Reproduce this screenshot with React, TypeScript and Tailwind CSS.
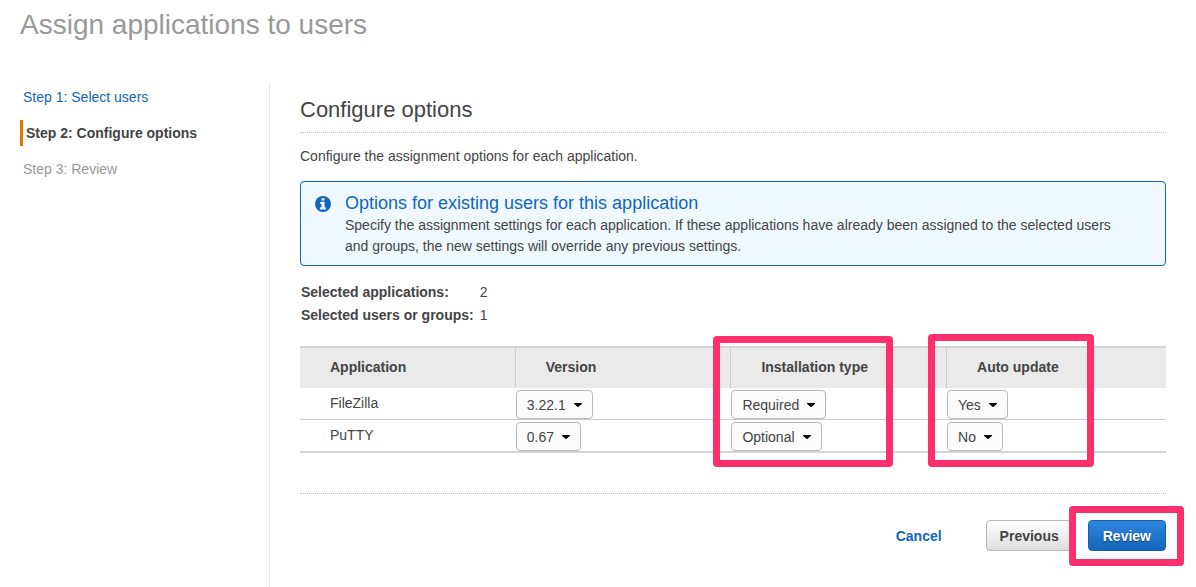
import type { ReactNode } from "react";

const apps = [
  { name: "FileZilla", version: "3.22.1", type: "Required", update: "Yes" },
  { name: "PuTTY", version: "0.67", type: "Optional", update: "No" },
];

function InfoIcon() {
  return (
    <svg viewBox="0 0 16 16" aria-hidden="true" className="mt-[5px] size-4 shrink-0">
      <circle cx="8" cy="8" r="8" fill="#1166bb" />
      <path
        fill="#f0f8ff"
        d="M6.9 2.2h2.2c.2 0 .4.2.4.4v1.5c0 .2-.2.4-.4.4H6.9c-.2 0-.4-.2-.4-.4V2.6c0-.2.2-.4.4-.4zM5.6 5.8h3.6c.2 0 .4.2.4.4v5.1h.9c.2 0 .4.2.4.4v1.5c0 .2-.2.4-.4.4H5.5c-.2 0-.4-.2-.4-.4v-1.5c0-.2.2-.4.4-.4h1V8h-.9c-.2 0-.4-.2-.4-.4V6.2c0-.2.2-.4.4-.4z"
      />
    </svg>
  );
}

function Dropdown({ label, value, options }: { label: string; value: string; options: string[] }) {
  return (
    <div className="relative inline-flex align-top">
      <select
        aria-label={label}
        defaultValue={value}
        className="h-[29px] appearance-none rounded border border-[#b8b8b8] bg-[#fcfcfc] pl-[10px] pr-[26px] pt-px text-[#444] [field-sizing:content]"
      >
        {options.map((o) => (
          <option key={o}>{o}</option>
        ))}
      </select>
      <svg
        viewBox="0 0 8 4"
        className="pointer-events-none absolute right-[11px] top-[13px] h-1 w-2 text-black"
        fill="currentColor"
      >
        <path d="M0.6 0h6.8c.6 0 .8.5.4.9L4.6 3.8a.9.9 0 0 1-1.2 0L.2.9C-.2.5 0 0 .6 0z" />
      </svg>
    </div>
  );
}

function Highlight({ className }: { className: string }) {
  return (
    <span
      className={`pointer-events-none absolute z-10 rounded-sm border-[7px] border-[#ff2f6e] ${className}`}
    />
  );
}

function HeadCell({ children }: { children: ReactNode }) {
  return (
    <th
      scope="col"
      className="relative h-[42px] w-[24.9%] border-l border-t-2 border-l-[#ccc] border-t-[#d4d4d4] bg-[#eaeaea] pb-[2px] pl-[30px] text-left font-bold first:w-[24.8%] first:border-l-0 last:w-auto"
    >
      {children}
    </th>
  );
}

export default function App() {
  const cell = "border-b border-[#ccc] pl-px pt-[2px] align-top group-last:border-b-2 group-last:border-[#d4d4d4]";

  return (
    <div className="flex min-h-screen flex-col bg-white font-['Liberation_Sans',Arial,sans-serif] text-sm leading-[21px] text-[#444]">
      <h1 className="px-5 pb-10 pt-[5px] text-[28px] leading-[39px] text-[#999]">
        Assign applications to users
      </h1>

      <div className="flex grow">
        <nav className="w-[270px] shrink-0 border-r border-[#e5e5e5] pl-5">
          <ol className="flex flex-col gap-[10px] leading-[22px]">
            <li className="border-l-[3px] border-transparent py-[2px]">
              <a href="#users" className="text-[#1166bb]">
                Step 1: Select users
              </a>
            </li>
            <li className="border-l-[3px] border-[#e07700] py-[2px] pl-[3px] font-bold" aria-current="step">
              Step 2: Configure options
            </li>
            <li className="border-l-[3px] border-transparent py-[2px] text-[#999]">Step 3: Review</li>
          </ol>
        </nav>

        <main className="min-w-0 grow pl-[30px] pr-[30px]">
          <h2 className="border-b border-dotted border-[#bbb] pb-[7px] pt-[11px] text-[22px] leading-[30px]">
            Configure options
          </h2>
          <p className="mt-[13px]">Configure the assignment options for each application.</p>

          <section className="mt-[14px] flex gap-[14px] rounded border border-[#1166bb] bg-[#f0f8ff] pb-2 pl-[14px] pr-10 pt-[9px]">
            <InfoIcon />
            <div>
              <h3 className="text-lg leading-6 text-[#1166bb]">Options for existing users for this application</h3>
              <p>
                Specify the assignment settings for each application. If these applications have already been
                assigned to the selected users and groups, the new settings will override any previous settings.
              </p>
            </div>
          </section>

          <dl className="ml-px mt-4 grid grid-cols-[auto_1fr] gap-x-[6px] gap-y-[2px]">
            <dt className="font-bold">Selected applications:</dt>
            <dd>2</dd>
            <dt className="font-bold">Selected users or groups:</dt>
            <dd>1</dd>
          </dl>

          <table className="mt-5 w-full table-fixed border-separate border-spacing-0">
            <thead>
              <tr>
                <HeadCell>Application</HeadCell>
                <HeadCell>Version</HeadCell>
                <HeadCell>
                  Installation type
                  <Highlight className="-left-[18px] -top-3 h-[131px] w-[180px]" />
                </HeadCell>
                <HeadCell>
                  Auto update
                  <Highlight className="-left-[19px] -top-[14px] h-[133px] w-[166px]" />
                </HeadCell>
              </tr>
            </thead>
            <tbody>
              {apps.map((app) => (
                <tr key={app.name} className="group">
                  <td className="border-b border-[#ccc] pl-[30px] pt-[5px] align-top group-last:border-b-2 group-last:border-[#d4d4d4]">
                    {app.name}
                  </td>
                  <td className={cell}>
                    <Dropdown label={`${app.name} version`} value={app.version} options={[app.version]} />
                  </td>
                  <td className={cell}>
                    <Dropdown
                      label={`${app.name} installation type`}
                      value={app.type}
                      options={["Required", "Optional"]}
                    />
                  </td>
                  <td className={cell}>
                    <Dropdown label={`${app.name} auto update`} value={app.update} options={["Yes", "No"]} />
                  </td>
                </tr>
              ))}
            </tbody>
          </table>

          <div className="mt-10 flex items-center justify-end gap-[15px] border-t border-dotted border-[#bbb] pb-9 pt-[26px] font-bold">
            <a href="#cancel" className="mr-[29px] pt-px text-[#1166bb]">
              Cancel
            </a>
            <button
              type="button"
              className="h-[31px] rounded border border-[#b8b8b8] bg-linear-to-b from-white to-[#dedede] px-[13px] pt-px"
            >
              Previous
            </button>
            <div className="relative">
              <button
                type="button"
                className="h-[31px] rounded border border-[#1160b0] bg-linear-to-b from-[#2e86de] to-[#1166bb] px-[14px] pt-px text-white text-shadow-[0_1px_1px_#0a3c70]"
              >
                Review
              </button>
              <Highlight className="-bottom-[15px] -left-[19px] -right-[18px] -top-[14px]" />
            </div>
          </div>
        </main>
      </div>
    </div>
  );
}
